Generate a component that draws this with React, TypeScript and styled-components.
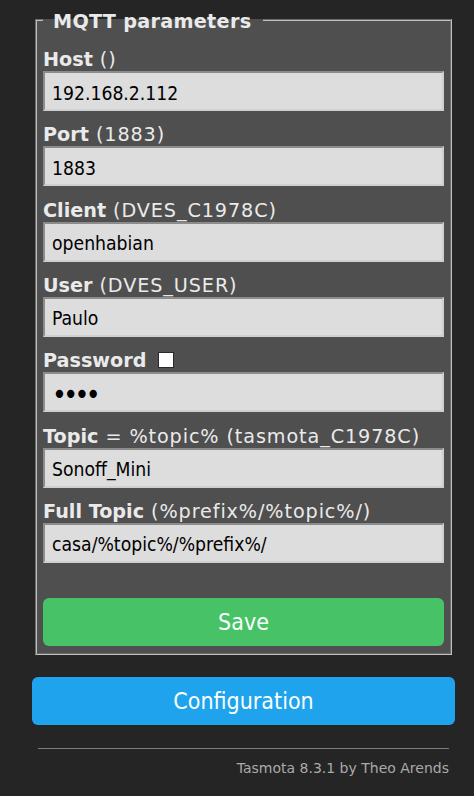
import React from 'react';
import styled, { createGlobalStyle } from 'styled-components';

const GlobalStyle = createGlobalStyle`
  html, body {
    margin: 0;
    padding: 0;
    background: #252525;
    min-height: 100%;
  }
  body {
    font-family: "DejaVu Sans", Verdana, sans-serif;
    color: #eaeaea;
  }
`;

const controlFont = `"DejaVu Sans Condensed", "DejaVu Sans", Tahoma, sans-serif`;

const Page = styled.div`
  width: 423px;
  margin-left: 32px;
  padding-top: 6px;
`;

const Fieldset = styled.fieldset`
  margin: 0 3px;
  padding: 15px 6px 7px;
  border: 2px groove #c0c0c0;
  background: #4f4f4f;
  min-width: 0;
`;

const Legend = styled.legend`
  padding: 4px 12px 0 10px;
  font-size: 19.2px;
  line-height: 23px;
  font-weight: bold;
  letter-spacing: 0.3px;
  color: #eaeaea;
`;

const Fields = styled.div`
  display: grid;
  row-gap: 12.33px;
`;

const Field = styled.div`
  display: block;
`;

const Label = styled.div`
  font-size: 19.2px;
  line-height: 23px;
  white-space: nowrap;
`;

const Name = styled.b`
  font-weight: bold;
`;

const Hint = styled.span`
  letter-spacing: 0.9px;
`;

const Toggle = styled.input`
  appearance: none;
  width: 16px;
  height: 16px;
  margin: 0 0 0 5px;
  vertical-align: -1px;
  background: #ffffff;
  border: 1px solid #2a2a2a;
  box-sizing: border-box;
`;

const TextInput = styled.input<{ $secret?: boolean }>`
  display: block;
  width: 100%;
  height: 40px;
  box-sizing: border-box;
  margin: 0;
  padding: 4px 7px 0;
  border: 2px solid;
  border-color: #8c8c8c #cfcfcf #cfcfcf #8c8c8c;
  background: #dddddd;
  color: #000000;
  font-family: ${controlFont};
  font-size: ${props => (props.$secret ? '28px' : '19.2px')};
  letter-spacing: ${props => (props.$secret ? '-3.6px' : 'normal')};
  outline: none;
`;

const Button = styled.button<{ $tone: 'green' | 'blue' }>`
  display: block;
  width: 100%;
  height: 48px;
  padding: 0;
  border: 0;
  border-radius: 6px;
  background: ${props => (props.$tone === 'green' ? '#47c266' : '#1fa3ec')};
  color: #faffff;
  font-family: ${controlFont};
  font-size: 23px;
  line-height: 48px;
  cursor: pointer;
`;

const SaveButton = styled(Button)`
  margin-top: 35px;
`;

const ConfigButton = styled(Button)`
  margin-top: 22px;
`;

const Footer = styled.div`
  margin-top: 23px;
  padding: 0 6px;
  text-align: right;
`;

const Rule = styled.hr`
  height: 0;
  margin: 0 0 9px;
  border: 0;
  border-top: 1px solid #7c7c7c;
`;

const Credit = styled.a`
  display: inline-block;
  color: #aaaaaa;
  font-size: 14px;
  line-height: 16px;
  text-decoration: none;
`;

type FieldDef = {
  name: string;
  hint?: string;
  value: string;
  password?: boolean;
};

const fields: FieldDef[] = [
  { name: 'Host', hint: ' ()', value: '192.168.2.112' },
  { name: 'Port', hint: ' (1883)', value: '1883' },
  { name: 'Client', hint: ' (DVES_C1978C)', value: 'openhabian' },
  { name: 'User', hint: ' (DVES_USER)', value: 'Paulo' },
  { name: 'Password', value: 'abcd', password: true },
  { name: 'Topic', hint: ' = %topic% (tasmota_C1978C)', value: 'Sonoff_Mini' },
  { name: 'Full Topic', hint: ' (%prefix%/%topic%/)', value: 'casa/%topic%/%prefix%/' },
];

const App = () => {
  return (
    <>
      <GlobalStyle />
      <Page>
        <Fieldset>
          <Legend>MQTT parameters</Legend>
          <Fields>
            {fields.map(f => (
              <Field key={f.name}>
                <Label>
                  <Name>{f.name}</Name>
                  {f.hint && <Hint>{f.hint}</Hint>}
                  {f.password && (
                    <>
                      {' '}
                      <Toggle type='checkbox' />
                    </>
                  )}
                </Label>
                <TextInput
                  type={f.password ? 'password' : 'text'}
                  $secret={f.password}
                  defaultValue={f.value}
                />
              </Field>
            ))}
          </Fields>
          <SaveButton $tone='green'>Save</SaveButton>
        </Fieldset>
        <ConfigButton $tone='blue'>Configuration</ConfigButton>
        <Footer>
          <Rule />
          <Credit href='#'>Tasmota 8.3.1 by Theo Arends</Credit>
        </Footer>
      </Page>
    </>
  );
};

export default App;
